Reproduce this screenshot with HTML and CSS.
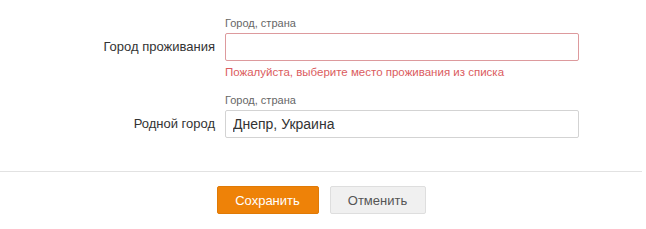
FILE: index.html
```html
<!DOCTYPE html>
<html lang="ru">
<head>
    <meta charset="UTF-8">
    <meta name="viewport" content="width=device-width, initial-scale=1.0">
    <title>Место проживания</title>
    <link rel="stylesheet" href="styles.css">
</head>
<body>
    <form class="city-form">
        <div class="fields">
            <div class="form-row">
                <label class="row-label" for="city">Город проживания</label>
                <div class="field">
                    <div class="hint">Город, страна</div>
                    <input class="input input-error" id="city" type="text" value="">
                    <div class="error-text">Пожалуйста, выберите место проживания из списка</div>
                </div>
            </div>
            <div class="form-row">
                <label class="row-label" for="home">Родной город</label>
                <div class="field">
                    <div class="hint">Город, страна</div>
                    <input class="input" id="home" type="text" value="Днепр, Украина">
                </div>
            </div>
        </div>
        <div class="actions">
            <button type="button" class="btn btn-save">Сохранить</button>
            <button type="button" class="btn btn-cancel">Отменить</button>
        </div>
    </form>
</body>
</html>
```

FILE: styles.css
```css
body {
    margin: 0;
    font-family: "Liberation Sans", Arial, sans-serif;
    background: #fff;
    color: #333;
}
.city-form {
    width: 646px;
}
.fields {
    padding: 17px 0 33px;
}
.form-row {
    display: grid;
    grid-template-columns: 215px 354px;
    column-gap: 10px;
}
.form-row + .form-row {
    margin-top: 15px;
}
.row-label {
    grid-row: 1;
    text-align: right;
    font-size: 13px;
    line-height: 28px;
    margin-top: 16px;
    color: #333;
}
.hint {
    font-size: 11px;
    line-height: 13px;
    color: #666;
    margin-bottom: 3px;
}
.input {
    display: block;
    box-sizing: border-box;
    width: 354px;
    height: 28px;
    margin: 0;
    padding: 0 7px;
    border: 1px solid #d3d3d3;
    border-radius: 2px;
    font-family: inherit;
    font-size: 14px;
    color: #333;
    outline: none;
}
.input-error {
    border-color: #dd9a9d;
}
.error-text {
    margin-top: 5px;
    font-size: 11.5px;
    line-height: 13px;
    color: #db5c60;
}
.actions {
    border-top: 1px solid #e2e2e2;
    margin-right: 4px;
    padding: 14px 0 15px;
    display: flex;
    justify-content: center;
    gap: 11px;
}
.btn {
    height: 28px;
    padding: 0;
    border-radius: 2px;
    font-family: inherit;
    font-size: 13px;
    cursor: pointer;
}
.btn-save {
    width: 102px;
    background: #ee8208;
    border: 1px solid #e07a06;
    color: #fff;
}
.btn-cancel {
    width: 96px;
    background: #f0f0f0;
    border: 1px solid #dedede;
    color: #555;
}
```
